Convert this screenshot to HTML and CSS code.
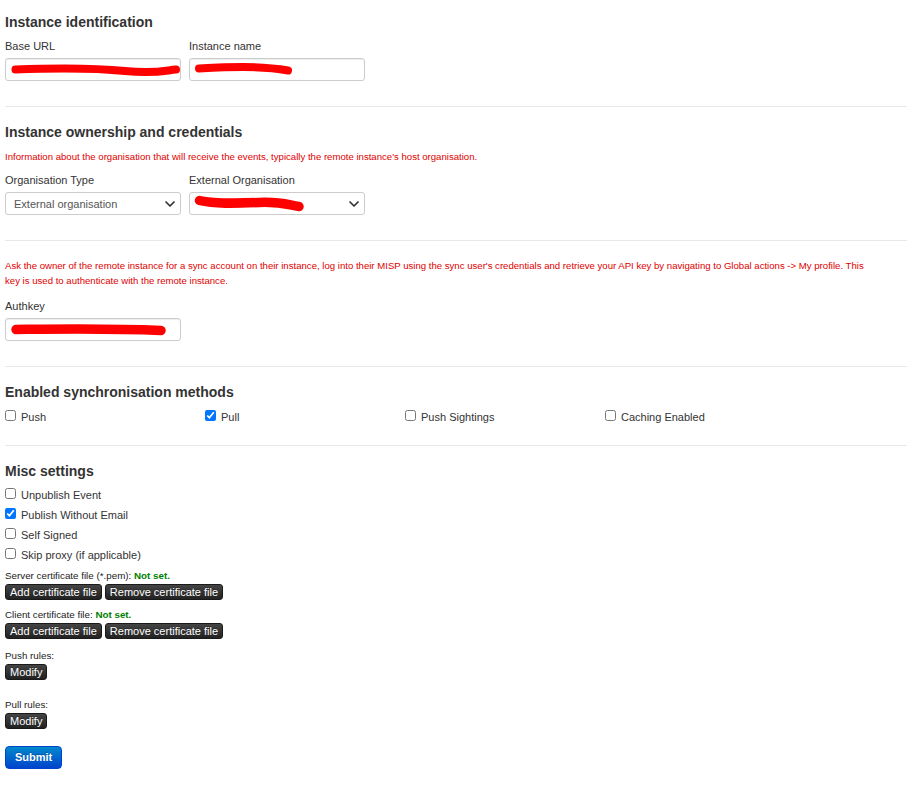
FILE: index.html
```html
<!DOCTYPE html>
<html lang="en">
<head>
<meta charset="utf-8">
<title>Remote instance</title>
<link rel="stylesheet" href="styles.css">
</head>
<body>
<form class="page">
  <h3 class="sec-title">Instance identification</h3>
  <div class="fields fields-first">
    <div class="field">
      <label class="lbl">Base URL</label>
      <div class="ctrl">
        <input class="inp" type="text">
        <svg class="redact" width="176" height="23" viewBox="0 0 176 23"><path d="M10.5 11.5 C 50 10, 90 10, 120 13 S 160 12.5, 171 11.5"/></svg>
      </div>
    </div>
    <div class="field">
      <label class="lbl">Instance name</label>
      <div class="ctrl">
        <input class="inp" type="text">
        <svg class="redact" width="176" height="23" viewBox="0 0 176 23"><path d="M10 10.5 C 40 9, 70 7.5, 99 12.5"/></svg>
      </div>
    </div>
  </div>

  <hr class="sep">

  <h3 class="sec-title">Instance ownership and credentials</h3>
  <p class="note">Information about the organisation that will receive the events, typically the remote instance's host organisation.</p>
  <div class="fields fields-after-note">
    <div class="field">
      <label class="lbl">Organisation Type</label>
      <div class="ctrl">
        <select class="sel"><option>External organisation</option></select>
        <svg class="chev" width="10" height="6" viewBox="0 0 10 6"><path d="M1 1 L5 5 L9 1"/></svg>
      </div>
    </div>
    <div class="field">
      <label class="lbl">External Organisation</label>
      <div class="ctrl">
        <select class="sel"><option></option></select>
        <svg class="chev" width="10" height="6" viewBox="0 0 10 6"><path d="M1 1 L5 5 L9 1"/></svg>
        <svg class="redact redact-thick" width="176" height="23" viewBox="0 0 176 23"><path d="M10.5 8.5 C 25 12, 45 11.5, 70 10.5 S 100 13.5, 110 14.5"/></svg>
      </div>
    </div>
  </div>

  <hr class="sep">

  <p class="note note-top">Ask the owner of the remote instance for a sync account on their instance, log into their MISP using the sync user's credentials and retrieve your API key by navigating to Global actions -&gt; My profile. This key is used to authenticate with the remote instance.</p>
  <div class="fields fields-after-long">
    <div class="field">
      <label class="lbl">Authkey</label>
      <div class="ctrl">
        <input class="inp" type="text">
        <svg class="redact redact-thick" width="176" height="23" viewBox="0 0 176 23"><path d="M11 11.5 C 50 11, 100 10, 156 12.5"/></svg>
      </div>
    </div>
  </div>

  <hr class="sep">

  <h3 class="sec-title">Enabled synchronisation methods</h3>
  <div class="sync-grid">
    <label class="chk"><input type="checkbox"> Push</label>
    <label class="chk"><input type="checkbox" checked> Pull</label>
    <label class="chk"><input type="checkbox"> Push Sightings</label>
    <label class="chk"><input type="checkbox"> Caching Enabled</label>
  </div>

  <hr class="sep sep-sync">

  <h3 class="sec-title">Misc settings</h3>
  <div class="misc-list">
    <label class="chk"><input type="checkbox"> Unpublish Event</label>
    <label class="chk"><input type="checkbox" checked> Publish Without Email</label>
    <label class="chk"><input type="checkbox"> Self Signed</label>
    <label class="chk"><input type="checkbox"> Skip proxy (if applicable)</label>
  </div>

  <div class="small-line first-line">Server certificate file (*.pem): <span class="green">Not set.</span></div>
  <div class="btn-row">
    <button type="button" class="btn-dark">Add certificate file</button>
    <button type="button" class="btn-dark">Remove certificate file</button>
  </div>

  <div class="small-line">Client certificate file: <span class="green">Not set.</span></div>
  <div class="btn-row">
    <button type="button" class="btn-dark">Add certificate file</button>
    <button type="button" class="btn-dark">Remove certificate file</button>
  </div>

  <div class="small-line rules-first">Push rules:</div>
  <div class="btn-row">
    <button type="button" class="btn-dark">Modify</button>
  </div>

  <div class="small-line rules-gap">Pull rules:</div>
  <div class="btn-row">
    <button type="button" class="btn-dark">Modify</button>
  </div>

  <div class="submit-row">
    <button type="button" class="btn-primary">Submit</button>
  </div>
</form>
</body>
</html>
```
FILE: styles.css
```css
html, body {
  margin: 0;
  background: #fff;
}

.page {
  padding: 12px 0 0 5px;
  font-family: "Liberation Sans", Arial, sans-serif;
  color: #333;
  margin: 0;
}

.sec-title {
  margin: 0;
  font-size: 14px;
  line-height: 20px;
  font-weight: bold;
  color: #333;
}

.fields {
  display: flex;
  gap: 8px;
  margin-top: 7px;
}

.fields-first {
  margin-top: 6px;
}

.fields-after-note {
  margin-top: 8px;
}

.fields-after-long {
  margin-top: 10px;
}

.field {
  display: flex;
  flex-direction: column;
  width: 176px;
}

.lbl {
  font-size: 11px;
  line-height: 16px;
  margin-bottom: 4px;
  color: #333;
}

.ctrl {
  position: relative;
  width: 176px;
  height: 23px;
}

.inp,
.sel {
  display: block;
  box-sizing: border-box;
  width: 176px;
  height: 23px;
  margin: 0;
  border: 1px solid #ccc;
  border-radius: 3px;
  background: #fff;
  box-shadow: inset 0 1px 1px rgba(0, 0, 0, 0.075);
  font-family: "Liberation Sans", Arial, sans-serif;
  font-size: 11px;
  color: #555;
  padding: 0 8px;
  outline: none;
}

.sel {
  -webkit-appearance: none;
  appearance: none;
  box-shadow: none;
}

.chev {
  position: absolute;
  right: 6px;
  top: 9px;
  pointer-events: none;
}

.chev path {
  fill: none;
  stroke: #333;
  stroke-width: 1.7;
  stroke-linecap: round;
  stroke-linejoin: round;
}

.redact {
  position: absolute;
  left: 0;
  top: 0;
  pointer-events: none;
}

.redact path {
  fill: none;
  stroke: #ff0000;
  stroke-width: 8;
  stroke-linecap: round;
  stroke-linejoin: round;
}

.redact-thick path {
  stroke-width: 9.5;
}

.sep {
  border: 0;
  border-top: 1px solid #e8e8e8;
  margin: 25px 0 15px 0;
  height: 0;
}

.sep-sync {
  margin-top: 18px;
}

.note {
  margin: 7px 0 0 0;
  max-width: 870px;
  font-size: 9.6px;
  line-height: 15px;
  color: #e00000;
}

.note-top {
  margin-top: 17px;
}

.sync-grid {
  display: grid;
  grid-template-columns: repeat(4, 200px);
  margin-top: 5px;
}

.misc-list {
  display: flex;
  flex-direction: column;
  margin-top: 4px;
}

.chk {
  display: flex;
  align-items: flex-start;
  height: 20px;
  font-size: 11px;
  line-height: 20px;
  color: #333;
}

.chk input {
  width: 11px;
  height: 11px;
  margin: 3px 5px 0 0;
  accent-color: #0075ff;
}

.small-line {
  font-size: 9.8px;
  line-height: 15px;
  color: #222;
  margin-top: 7px;
}

.first-line {
  margin-top: 3px;
}

.rules-first {
  margin-top: 9px;
}

.rules-gap {
  margin-top: 17px;
}

.green {
  color: #008000;
  font-weight: bold;
}

.btn-row {
  display: flex;
  gap: 3px;
  margin-top: 1px;
}

.btn-dark {
  margin: 0;
  padding: 0 4px;
  height: 16px;
  border: 1px solid #1a1a1a;
  border-radius: 3px;
  background: linear-gradient(#444, #222);
  color: #fff;
  font-family: "Liberation Sans", Arial, sans-serif;
  font-size: 11px;
  line-height: 14px;
  text-shadow: 0 -1px 0 rgba(0, 0, 0, 0.25);
  cursor: pointer;
}

.submit-row {
  margin-top: 17px;
}

.btn-primary {
  margin: 0;
  padding: 4px 9px;
  border: 1px solid #0044cc;
  border-radius: 4px;
  background: linear-gradient(#0088cc, #0044cc);
  color: #fff;
  font-family: "Liberation Sans", Arial, sans-serif;
  font-size: 11px;
  font-weight: bold;
  line-height: 13px;
  text-shadow: 0 -1px 0 rgba(0, 0, 0, 0.25);
  cursor: pointer;
}
```
